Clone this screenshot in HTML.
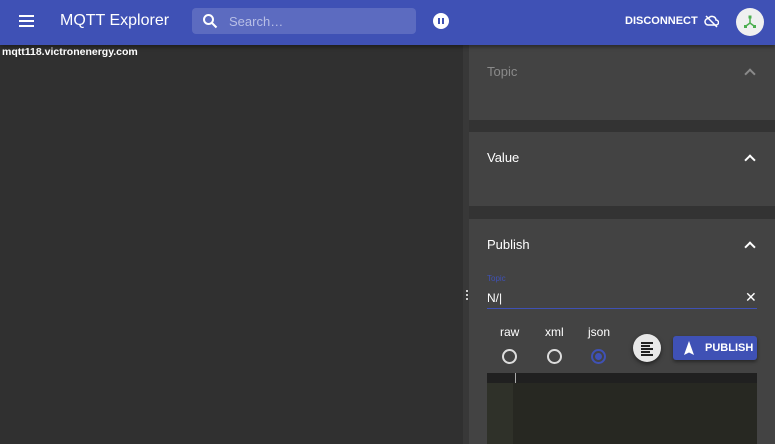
<!DOCTYPE html>
<html><head><style>
*{margin:0;padding:0;box-sizing:border-box}
body{width:775px;height:444px;overflow:hidden;background:#303030;font-family:"Liberation Sans",sans-serif;position:relative}
.hdr{position:absolute;left:0;top:0;width:775px;height:45px;background:#3f51b5;box-shadow:0 2px 4px rgba(0,0,0,.4);z-index:2}
.abs{position:absolute}
.panel{position:absolute;left:469px;width:306px;background:#434343}
.ttl{position:absolute;left:18px;font-size:13px;color:#fff}
.chev{position:absolute;right:21px;width:8px;height:8px;border-left:2px solid #fff;border-top:2px solid #fff;transform:rotate(45deg)}
.radio{position:absolute;top:349px;width:15px;height:15px;border:2px solid #ddd;border-radius:50%}
.lbl{position:absolute;top:325px;font-size:12px;color:#fff}
</style></head><body>
<div class="hdr">
 <div class="abs" style="left:19px;top:15px;width:15px;height:2px;background:#fff;box-shadow:0 5px 0 #fff,0 10px 0 #fff"></div>
 <div class="abs" style="left:60px;top:12px;font-size:16px;color:#fff">MQTT Explorer</div>
 <div class="abs" style="left:192px;top:8px;width:224px;height:26px;background:#5c6bc0;border-radius:4px">
  <svg class="abs" style="left:10px;top:5px" width="16" height="16" viewBox="0 0 16 16"><circle cx="6.5" cy="6.5" r="4.5" fill="none" stroke="#fff" stroke-width="2"/><path d="M10 10l4.5 4.5" stroke="#fff" stroke-width="2"/></svg>
  <div class="abs" style="left:37px;top:6px;font-size:13px;color:#b8bfe6">Search…</div>
 </div>
 <div class="abs" style="left:433px;top:13px;width:16px;height:16px;border-radius:50%;background:#fff">
  <div class="abs" style="left:5px;top:5px;width:2px;height:6px;background:#3f51b5"></div><div class="abs" style="left:9px;top:5px;width:2px;height:6px;background:#3f51b5"></div>
 </div>
 <div class="abs" style="left:625px;top:15px;font-size:11px;font-weight:bold;color:#fff">DISCONNECT</div>
 <svg class="abs" style="left:704px;top:14px" width="15" height="14" viewBox="0 0 15 14"><path d="M4 11h8a2.5 2.5 0 0 0 0-5 4 4 0 0 0-7.5-1.5A3 3 0 0 0 4 11z" fill="none" stroke="#fff" stroke-width="1.5"/><path d="M2 2l11 11" stroke="#fff" stroke-width="1.5"/></svg>
 <div class="abs" style="left:736px;top:8px;width:28px;height:28px;border-radius:50%;background:#f0f0f0">
  <svg class="abs" style="left:6px;top:6px" width="16" height="16" viewBox="0 0 16 16"><path d="M8 3v6M8 9l-4 3M8 9l4 3" stroke="#4caf50" stroke-width="1.5"/><rect x="6.5" y="1.5" width="3" height="3" fill="#4caf50"/><rect x="2" y="11" width="3" height="3" fill="#4caf50"/><rect x="11" y="11" width="3" height="3" fill="#4caf50"/></svg>
 </div>
</div>
<div class="abs" style="left:2px;top:46px;font-size:10.5px;font-weight:bold;color:#fff">mqtt118.victronenergy.com</div>
<div class="abs" style="left:463px;top:45px;width:6px;height:399px;background:#383838"></div>
<div class="abs" style="left:466px;top:290px;width:2px;height:2px;background:#ccc;box-shadow:0 4px 0 #ccc,0 8px 0 #ccc"></div>
<div class="abs" style="left:469px;top:45px;width:306px;height:399px;background:#333"></div>
<div class="panel" style="top:45px;height:75px">
 <div class="ttl" style="top:19px;color:#8a8a8a">Topic</div><div class="chev" style="top:25px;border-color:#8a8a8a"></div>
</div>
<div class="panel" style="top:132px;height:74px">
 <div class="ttl" style="top:18px">Value</div><div class="chev" style="top:24px"></div>
</div>
<div class="panel" style="top:219px;height:225px">
 <div class="ttl" style="top:18px">Publish</div><div class="chev" style="top:24px"></div>
</div>
<div class="abs" style="left:487px;top:274px;font-size:8px;color:#3f51b5">Topic</div>
<div class="abs" style="left:487px;top:291px;font-size:12px;color:#fff">N/|</div>
<div class="abs" style="left:745px;top:289px;font-size:14px;color:#fff">✕</div>
<div class="abs" style="left:487px;top:308px;width:270px;height:1px;background:#3f51b5"></div>
<div class="lbl" style="left:500px">raw</div><div class="lbl" style="left:545px">xml</div><div class="lbl" style="left:588px">json</div>
<div class="radio" style="left:502px"></div><div class="radio" style="left:547px"></div>
<div class="radio" style="left:591px;border-color:#3f51b5"><div class="abs" style="left:2px;top:2px;width:7px;height:7px;border-radius:50%;background:#3f51b5"></div></div>
<div class="abs" style="left:633px;top:334px;width:28px;height:28px;border-radius:50%;background:#e8e8e8;box-shadow:0 2px 4px rgba(0,0,0,.5)">
 <div class="abs" style="left:8px;top:8px;width:12px;height:1.5px;background:#222"></div>
 <div class="abs" style="left:8px;top:11px;width:9px;height:1.5px;background:#222"></div>
 <div class="abs" style="left:8px;top:14px;width:12px;height:1.5px;background:#222"></div>
 <div class="abs" style="left:8px;top:17px;width:9px;height:1.5px;background:#222"></div>
 <div class="abs" style="left:8px;top:20px;width:12px;height:1.5px;background:#222"></div>
</div>
<div class="abs" style="left:673px;top:336px;width:84px;height:24px;background:#3f51b5;border-radius:3px;box-shadow:0 2px 3px rgba(0,0,0,.4)">
 <svg class="abs" style="left:10px;top:4px" width="12" height="16" viewBox="0 0 12 16"><path d="M6 1L11 15L6 12.5L1 15z" fill="#fff"/></svg>
 <div class="abs" style="left:32px;top:6px;font-size:11px;font-weight:bold;color:#fff">PUBLISH</div>
</div>
<div class="abs" style="left:487px;top:373px;width:270px;height:71px;background:#272822"></div>
<div class="abs" style="left:487px;top:373px;width:270px;height:10px;background:#202020"></div>
<div class="abs" style="left:487px;top:383px;width:26px;height:61px;background:#2f3129"></div>
<div class="abs" style="left:515px;top:373px;width:1px;height:10px;background:#aaa"></div>
</body></html>
